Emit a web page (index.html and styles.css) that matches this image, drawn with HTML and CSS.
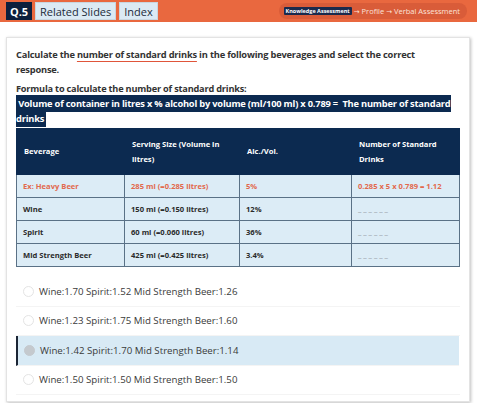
FILE: index.html
```html
<!DOCTYPE html>
<html>
<head>
    <title>Q.5 - Knowledge Assessment</title>
    <link rel="stylesheet" href="styles.css">
</head>
<body>
    <div class="top-bar">
        <div class="tabs">
            <span class="tab tab-q">Q.5</span>
            <span class="tab">Related Slides</span>
            <span class="tab">Index</span>
        </div>
        <div class="crumbs">
            <span class="crumb-badge">Knowledge Assessment</span>
            <span><span class="arrow">&rarr;</span> Profile <span class="arrow">&rarr;</span> Verbal Assessment</span>
        </div>
    </div>

    <div class="card">
        <p class="question">Calculate the <span class="underline">number of standard drinks</span> in the following beverages and select the correct response.</p>

        <p class="formula-label">Formula to calculate the number of standard drinks:</p>
        <p class="formula"><span>&nbsp;Volume of container in litres x % alcohol by volume (ml/100 ml) x 0.789 = &nbsp;The number of standard drinks&nbsp;</span></p>

        <table class="drinks">
            <thead>
                <tr>
                    <th>Beverage</th>
                    <th>Serving Size (Volume in litres)</th>
                    <th>Alc./Vol.</th>
                    <th>Number of Standard Drinks</th>
                </tr>
            </thead>
            <tbody>
                <tr class="example">
                    <td>Ex: Heavy Beer</td>
                    <td>285 ml (=0.285 litres)</td>
                    <td>5%</td>
                    <td>0.285 x 5 x 0.789 = 1.12</td>
                </tr>
                <tr>
                    <td>Wine</td>
                    <td>150 ml (=0.150 litres)</td>
                    <td>12%</td>
                    <td class="blank">_ _ _ _ _ _</td>
                </tr>
                <tr>
                    <td>Spirit</td>
                    <td>60 ml (=0.060 litres)</td>
                    <td>36%</td>
                    <td class="blank">_ _ _ _ _ _</td>
                </tr>
                <tr>
                    <td>Mid Strength Beer</td>
                    <td>425 ml (=0.425 litres)</td>
                    <td>3.4%</td>
                    <td class="blank">_ _ _ _ _ _</td>
                </tr>
            </tbody>
        </table>

        <div class="options">
            <div class="option"><span class="radio"></span>Wine:1.70 Spirit:1.52 Mid Strength Beer:1.26</div>
            <div class="option"><span class="radio"></span>Wine:1.23 Spirit:1.75 Mid Strength Beer:1.60</div>
            <div class="option selected"><span class="radio"></span>Wine:1.42 Spirit:1.70 Mid Strength Beer:1.14</div>
            <div class="option"><span class="radio"></span>Wine:1.50 Spirit:1.50 Mid Strength Beer:1.50</div>
        </div>
    </div>
</body>
</html>
```

FILE: styles.css
```css
body {
    margin: 0;
    font-family: "Open Sans", "Noto Sans", sans-serif;
    background-color: #ffffff;
    color: #333;
}

.top-bar {
    display: flex;
    justify-content: space-between;
    align-items: center;
    height: 22px;
    padding: 0 10px 0 6px;
    background-color: #e9683f;
}

.tabs {
    display: flex;
    gap: 3px;
}

.tab {
    display: inline-block;
    height: 18px;
    line-height: 17px;
    padding: 0 4px;
    font-size: 11px;
    color: #1c2a3a;
    background-color: #dbeaf4;
    border: 1px solid #c9d6df;
    box-sizing: border-box;
}

.tab-q {
    width: 26px;
    padding: 0;
    text-align: center;
    font-weight: bold;
    color: #ffffff;
    background-color: #0c1f3d;
    border-color: #0c1f3d;
}

.crumbs {
    display: flex;
    align-items: center;
    gap: 2px;
    height: 16px;
    padding: 0 7px 0 5px;
    border-radius: 8px;
    background-color: #d95c39;
    font-size: 7.5px;
    color: #fbe3da;
}

.arrow {
    font-family: "DejaVu Sans", sans-serif;
    font-size: 7px;
}

.crumb-badge {
    padding: 0 2px;
    font-size: 5.5px;
    font-weight: bold;
    line-height: 8px;
    color: #ffffff;
    background-color: #1a2a4c;
    border-radius: 1px;
}

.card {
    margin: 15px 7px 5px 6px;
    padding: 9px 9px 6px 9px;
    background-color: #ffffff;
    border: 1px solid #e3e3e3;
    box-shadow: 1px 1px 3px rgba(0, 0, 0, 0.25);
}

.question,
.formula-label,
.formula {
    margin: 0;
    font-weight: bold;
    letter-spacing: -0.2px;
    line-height: 15px;
    color: #333;
}

.question {
    max-width: 410px;
    font-size: 9.3px;
    margin-bottom: 4px;
}

.formula-label {
    font-size: 9.2px;
}

.underline {
    text-decoration: underline;
    text-decoration-color: #e0553a;
    text-underline-offset: 3px;
}

.formula {
    font-size: 9.3px;
    margin-bottom: 2px;
}

.formula span {
    color: #ffffff;
    background-color: #0c2a50;
    padding: 2px 0;
}

.drinks {
    width: 100%;
    border-collapse: collapse;
    font-size: 7.6px;
    font-weight: bold;
}

.drinks th {
    height: 45px;
    padding: 0 7px;
    text-align: left;
    vertical-align: middle;
    line-height: 15px;
    color: #ffffff;
    background-color: #0c2a50;
    border: 1px solid #0c2a50;
}

.drinks td {
    height: 22px;
    padding: 0 6px;
    color: #2b2b2b;
    background-color: #dcecf6;
    border: 1px solid #5a7186;
}

.drinks th:nth-child(1) { width: 93px; }
.drinks th:nth-child(2) { width: 100px; }
.drinks th:nth-child(3) { width: 97px; }

.drinks .example td {
    color: #e2694d;
}

.drinks td.blank {
    color: #8a8f96;
    font-weight: normal;
}

.options {
    margin-top: 10px;
}

.option {
    display: flex;
    align-items: center;
    gap: 5px;
    height: 29.5px;
    padding-left: 7px;
    font-size: 9.7px;
    color: #3a3a3a;
    border-bottom: 1px solid #f4f4f4;
    box-sizing: border-box;
}

.radio {
    width: 11px;
    height: 11px;
    border-radius: 50%;
    border: 1px solid #e4e4e4;
    background-color: #ffffff;
    box-sizing: border-box;
}

.option.selected {
    background-color: #d8eaf5;
    border-left: 2px solid #1b2535;
    padding-left: 6px;
    margin-right: 1px;
}

.option.selected .radio {
    background-color: #c4c9ce;
    border-color: #c4c9ce;
}
```
